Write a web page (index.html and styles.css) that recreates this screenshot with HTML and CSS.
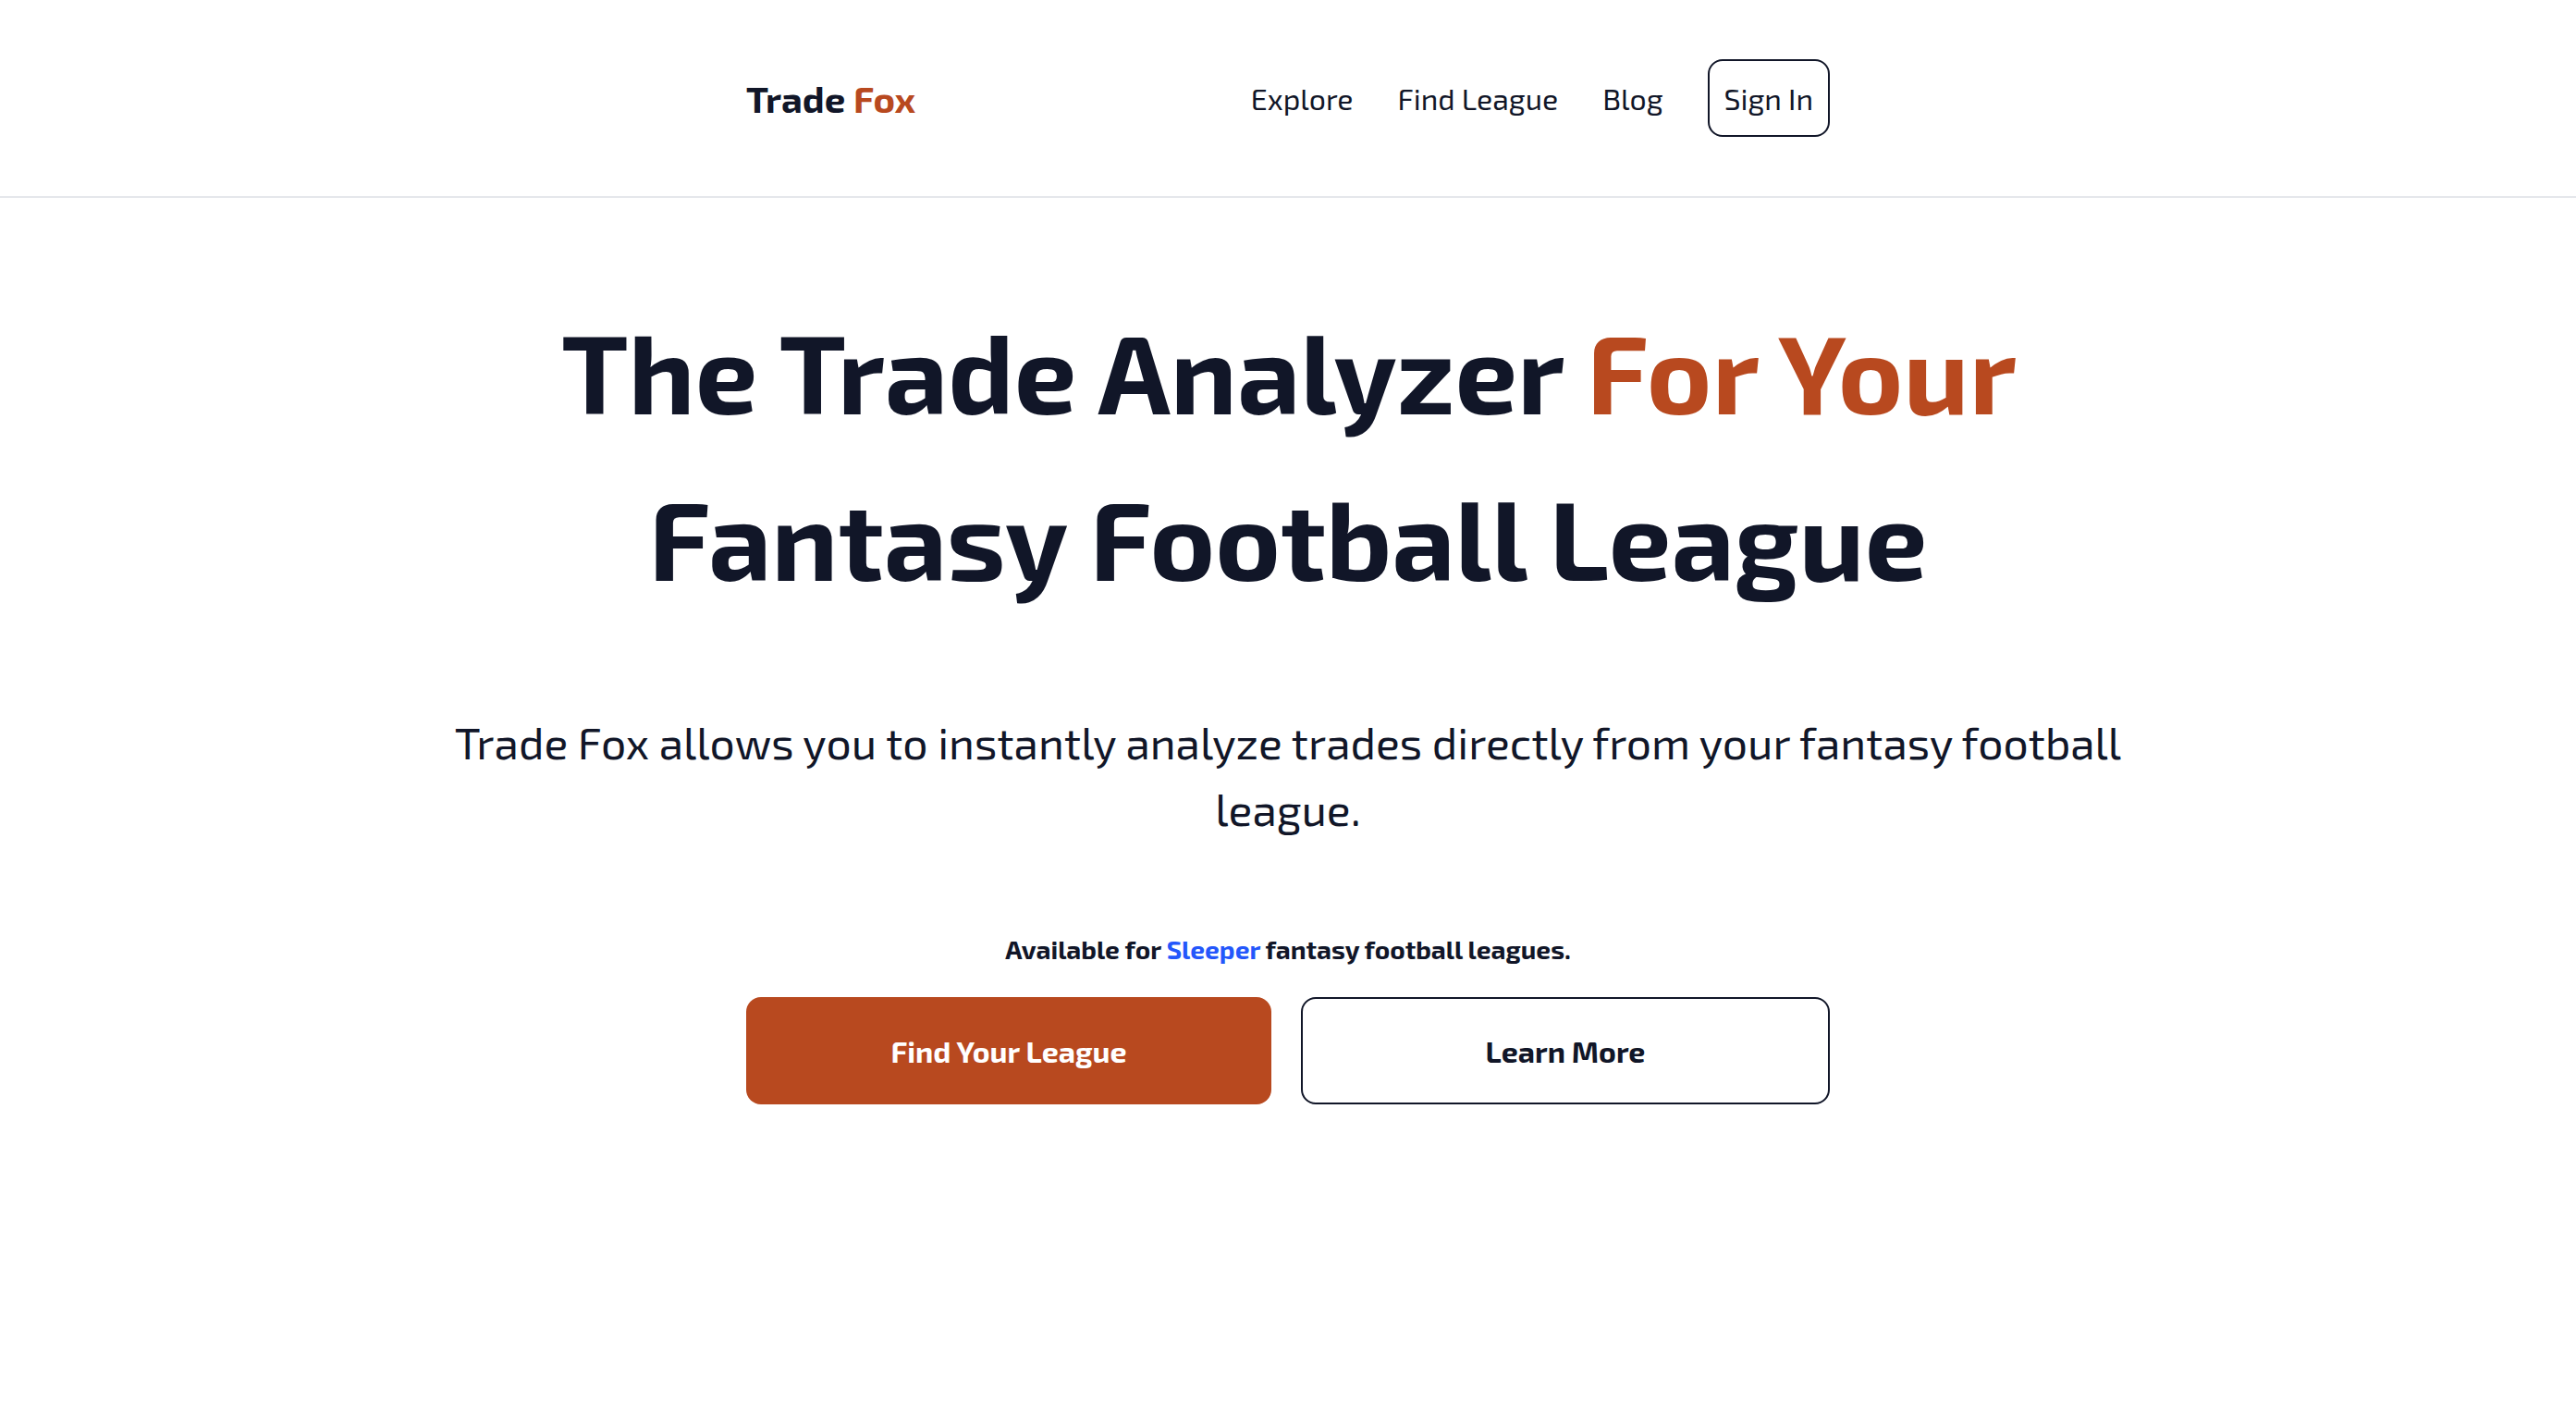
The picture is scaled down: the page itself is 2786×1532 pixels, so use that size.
FILE: index.html
```
<!DOCTYPE html>
<html lang="en">
<head>
  <meta charset="utf-8">
  <meta name="viewport" content="width=device-width, initial-scale=1">
  <title>Trade Fox</title>
  <link rel="stylesheet" href="styles.css">
</head>
<body>
  <header class="site-header">
    <div class="container header-row">
      <a class="logo" href="#">Trade <span class="accent">Fox</span></a>
      <nav class="nav" aria-label="Main">
        <a href="#">Explore</a>
        <a href="#">Find League</a>
        <a href="#">Blog</a>
        <a class="sign-in" href="#">Sign In</a>
      </nav>
    </div>
  </header>
  <main class="hero">
    <h1 class="title">The Trade Analyzer <span class="accent">For Your</span> Fantasy Football League</h1>
    <p class="lead">Trade Fox allows you to instantly analyze trades directly from your fantasy football league.</p>
    <div class="container">
      <p class="note">Available for <a class="sleeper" href="#">Sleeper</a> fantasy football leagues.</p>
      <div class="actions">
        <a class="btn btn-primary" href="#">Find Your League</a>
        <a class="btn btn-outline" href="#">Learn More</a>
      </div>
    </div>
  </main>
</body>
</html>
```
FILE: styles.css
```
:root {
  --ink: #111628;
  --accent: #b8491f;
  --line: #e5e7eb;
}

* {
  box-sizing: border-box;
  margin: 0;
}

body {
  background: #fff;
  color: var(--ink);
  font-family: "Exo 2", Roboto, sans-serif;
  font-size: 32px;
  line-height: 1.5;
}

a {
  color: inherit;
  text-decoration: none;
}

.accent {
  color: var(--accent);
}

.container {
  width: 100%;
  max-width: 1172px;
  margin: 0 auto;
}

.site-header {
  padding: 64px 32px;
  border-bottom: 2px solid var(--line);
}

.header-row {
  display: flex;
  flex-wrap: wrap;
  align-items: center;
  justify-content: space-between;
  gap: 16px 48px;
}

.logo {
  font-size: 40px;
  font-weight: 700;
}

.nav {
  display: flex;
  flex-wrap: wrap;
  align-items: center;
  gap: 16px 48px;
}

.sign-in {
  padding: 16px;
  border: 2px solid var(--ink);
  border-radius: 16px;
}

.hero {
  max-width: 1868px;
  margin: 0 auto;
  padding: 96px 32px;
  text-align: center;
}

.title {
  max-width: 1700px;
  margin: 0 auto;
  font-size: 120px;
  font-weight: 700;
}

.lead {
  margin: 96px 0;
  font-size: 48px;
}

.note {
  margin-bottom: 32px;
  font-size: 28px;
  font-weight: 700;
  line-height: 40px;
}

.sleeper {
  color: #2457fb;
}

.actions {
  display: flex;
  gap: 32px;
}

.btn {
  box-sizing: content-box;
  display: flex;
  flex: 1;
  align-items: center;
  justify-content: center;
  padding: 32px 0;
  border-radius: 16px;
  font-weight: 700;
}

.btn-primary {
  background: var(--accent);
  color: #fff;
}

.btn-outline {
  border: 2px solid var(--ink);
}
```
